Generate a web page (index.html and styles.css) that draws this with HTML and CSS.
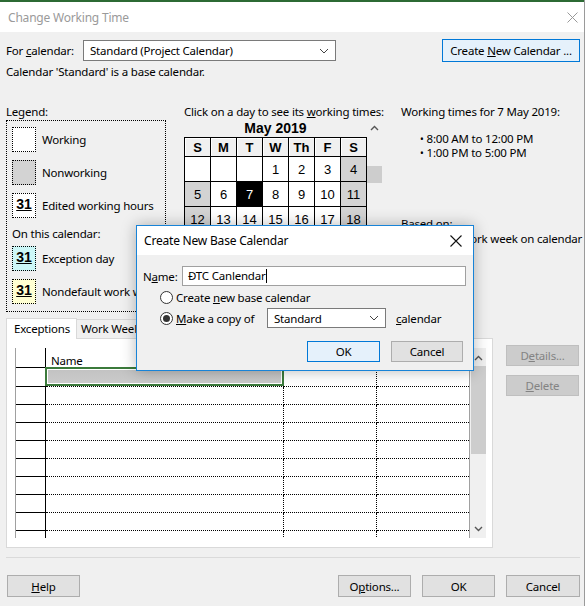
FILE: index.html
```html
<!DOCTYPE html>
<html>
<head>
  <title>Change Working Time</title>
  <link rel="stylesheet" href="styles.css">
</head>
<body>
  <div class="window">
    <div class="topline"></div>
    <div class="titlebar">
      <span class="title">Change Working Time</span>
      <svg class="close" width="11" height="11" viewBox="0 0 11 11"><path d="M0.5 0.5L10.5 10.5M10.5 0.5L0.5 10.5" stroke="#999" stroke-width="1" fill="none"/></svg>
    </div>

    <div class="content">
      <div class="cal-row">
        <label class="cal-label">For <u>c</u>alendar:</label>
        <div class="select wide">
          <span>Standard (Project Calendar)</span>
          <svg width="10" height="6" viewBox="0 0 10 6"><path d="M1 1L5 5L9 1" stroke="#444" fill="none"/></svg>
        </div>
        <button class="btn focus new-cal">Create <u>N</u>ew Calendar ...</button>
      </div>
      <div class="note">Calendar 'Standard' is a base calendar.</div>

      <div class="middle">
        <!-- legend -->
        <div class="legend">
          <div class="line">Legend:</div>
          <div class="legend-box">
            <div class="legend-item"><span class="swatch"></span>Working</div>
            <div class="legend-item"><span class="swatch gray"></span>Nonworking</div>
            <div class="legend-item"><span class="swatch">31</span>Edited working hours</div>
            <div class="line on-cal">On this calendar:</div>
            <div class="legend-item first"><span class="swatch cyan">31</span>Exception day</div>
            <div class="legend-item"><span class="swatch yellow">31</span>Nondefault work week</div>
          </div>
        </div>

        <!-- month picker -->
        <div class="picker">
          <div class="line">Click on a day to see its <u>w</u>orking times:</div>
          <div class="picker-body">
            <div class="month">
              <div class="month-name">May 2019</div>
              <div class="days">
                <div class="dh">S</div><div class="dh">M</div><div class="dh">T</div><div class="dh">W</div><div class="dh">Th</div><div class="dh">F</div><div class="dh">S</div>
                <div class="d"></div><div class="d"></div><div class="d"></div><div class="d">1</div><div class="d">2</div><div class="d">3</div><div class="d we">4</div>
                <div class="d we">5</div><div class="d">6</div><div class="d sel">7</div><div class="d">8</div><div class="d">9</div><div class="d">10</div><div class="d we">11</div>
                <div class="d we">12</div><div class="d">13</div><div class="d">14</div><div class="d">15</div><div class="d">16</div><div class="d">17</div><div class="d we">18</div>
                <div class="d we">19</div><div class="d">20</div><div class="d">21</div><div class="d">22</div><div class="d">23</div><div class="d">24</div><div class="d we">25</div>
                <div class="d we">26</div><div class="d">27</div><div class="d">28</div><div class="d">29</div><div class="d">30</div><div class="d">31</div><div class="d we"></div>
              </div>
            </div>
            <div class="cal-scroll">
              <svg class="chev" width="9" height="6" viewBox="0 0 9 6"><path d="M1 5L4.5 1.5L8 5" stroke="#555" stroke-width="1.4" fill="none"/></svg>
              <div class="cal-thumb"></div>
            </div>
          </div>
        </div>

        <!-- working times -->
        <div class="times">
          <div class="line">Working times for 7 May 2019:</div>
          <ul class="bullets top">
            <li>8:00 AM to 12:00 PM</li>
            <li>1:00 PM to 5:00 PM</li>
          </ul>
          <div class="line based">Based on:</div>
          <ul class="bullets base">
            <li>Default work week on calendar<br>'Standard'.</li>
          </ul>
        </div>
      </div>

      <div class="lower">
        <div class="tabs">
          <div class="tabstrip">
            <div class="tab active">Exceptions</div>
            <div class="tab">Work Weeks</div>
          </div>
          <div class="tabpanel">
            <div class="grid-wrap">
              <div class="grid">
                <div class="rh hd"></div><div class="ch">Name</div><div class="ch"></div><div class="ch"></div>
                <div class="rh"></div><div class="c1"><div class="cur"></div></div><div class="c2"></div><div class="c3"></div>
                <div class="rh"></div><div class="c1"></div><div class="c2"></div><div class="c3"></div>
                <div class="rh"></div><div class="c1"></div><div class="c2"></div><div class="c3"></div>
                <div class="rh"></div><div class="c1"></div><div class="c2"></div><div class="c3"></div>
                <div class="rh"></div><div class="c1"></div><div class="c2"></div><div class="c3"></div>
                <div class="rh"></div><div class="c1"></div><div class="c2"></div><div class="c3"></div>
                <div class="rh"></div><div class="c1"></div><div class="c2"></div><div class="c3"></div>
                <div class="rh"></div><div class="c1"></div><div class="c2"></div><div class="c3"></div>
                <div class="rh"></div><div class="c1"></div><div class="c2"></div><div class="c3"></div>
                <div class="rh"></div><div class="c1"></div><div class="c2"></div><div class="c3"></div>
              </div>
              <div class="vscroll">
                <svg width="9" height="6" viewBox="0 0 9 6"><path d="M1 5L4.5 1.5L8 5" stroke="#555" stroke-width="1.4" fill="none"/></svg>
                <div class="thumb"></div>
                <svg class="down" width="9" height="6" viewBox="0 0 9 6"><path d="M1 1L4.5 4.5L8 1" stroke="#555" stroke-width="1.4" fill="none"/></svg>
              </div>
            </div>
          </div>
        </div>
        <div class="side">
          <button class="btn off">D<u>e</u>tails...</button>
          <button class="btn off"><u>D</u>elete</button>
        </div>
      </div>

      <div class="sep"></div>

      <div class="footer">
        <button class="btn"><u>H</u>elp</button>
        <div class="spacer"></div>
        <button class="btn">O<u>p</u>tions...</button>
        <button class="btn">OK</button>
        <button class="btn">Cancel</button>
      </div>
    </div>

    <!-- Create New Base Calendar dialog -->
    <div class="modal">
      <div class="modal-title">
        <span>Create New Base Calendar</span>
        <svg width="12" height="12" viewBox="0 0 12 12"><path d="M0.5 0.5L11.5 11.5M11.5 0.5L0.5 11.5" stroke="#111" stroke-width="1.1" fill="none"/></svg>
      </div>
      <div class="modal-body">
        <div class="name-row">
          <label class="name-label">N<u>a</u>me:</label>
          <div class="input">ĐTC Canlendar<span class="caret"></span></div>
        </div>
        <div class="radio-row">
          <span class="radio"></span>
          <span>Create <u>n</u>ew base calendar</span>
        </div>
        <div class="radio-row copy">
          <span class="radio on"></span>
          <span class="copy-label"><u>M</u>ake a copy of</span>
          <div class="select small">
            <span>Standard</span>
            <svg width="10" height="6" viewBox="0 0 10 6"><path d="M1 1L5 5L9 1" stroke="#444" fill="none"/></svg>
          </div>
          <span class="after"><u>c</u>alendar</span>
        </div>
        <div class="modal-buttons">
          <button class="btn focus ok">OK</button>
          <button class="btn">Cancel</button>
        </div>
      </div>
    </div>
  </div>
</body>
</html>
```

FILE: styles.css
```css
html, body {
  margin: 0;
  height: 100%;
}

body {
  background: #ffffff;
  font-family: "Noto Sans", sans-serif;
  font-size: 11.5px;
  letter-spacing: -0.2px;
  color: #000;
}

u {
  text-decoration: underline;
  text-underline-offset: 1px;
}

.window {
  position: relative;
  width: 585px;
  height: 606px;
  background: #f0f0f0;
  border-right: 1px solid #9a9a9a;
  box-sizing: border-box;
  overflow: hidden;
}

.topline {
  height: 2px;
  background: #2c6a34;
}

.titlebar {
  height: 30px;
  background: #fff;
  display: flex;
  align-items: center;
  justify-content: space-between;
  padding: 0 6px 0 8px;
}

.title {
  color: #9a9a9a;
  font-size: 12px;
}

.content {
  padding: 0 4px 0 6px;
}

.line {
  line-height: 16px;
  white-space: nowrap;
}

/* buttons */
.btn {
  font-family: "Noto Sans", sans-serif;
  font-size: 11.5px;
  letter-spacing: -0.2px;
  color: #000;
  background: #e1e1e1;
  border: 1px solid #adadad;
  height: 22px;
  width: 73px;
  padding: 0;
}

.btn.focus {
  border-color: #0078d7;
}

.btn.off {
  background: #cccccc;
  border-color: #bfbfbf;
  color: #838383;
}

/* top row */
.cal-row {
  display: flex;
  align-items: center;
  height: 23px;
  margin-top: 7px;
}

.cal-label {
  width: 77px;
}

.select {
  display: flex;
  align-items: center;
  justify-content: space-between;
  background: #fff;
  border: 1px solid #7a7a7a;
  box-sizing: border-box;
  padding: 0 6px 0 6px;
}

.select.wide {
  width: 253px;
  height: 21px;
}

.new-cal {
  margin-left: auto;
  width: 138px;
  height: 23px;
  background: #e5f1fb;
}

.note {
  margin-top: 2px;
  line-height: 16px;
}

/* middle */
.middle {
  display: flex;
  margin-top: 24px;
}

.legend {
  width: 160px;
  flex: none;
}

.legend-box {
  height: 192px;
  border: 1px dotted #000;
  box-sizing: border-box;
  padding: 6px 5px 0;
}

.legend-item {
  display: flex;
  align-items: center;
  gap: 6px;
  height: 25px;
  margin-bottom: 8px;
  white-space: nowrap;
}

.legend-item.first {
  margin-top: 4px;
}

.swatch {
  flex: none;
  width: 24px;
  height: 25px;
  box-sizing: border-box;
  border: 1px dotted #000;
  background: #fff;
  text-align: center;
  font: bold 14px "Liberation Sans", sans-serif;
  letter-spacing: 0;
  line-height: 20px;
  text-decoration: underline;
}

.swatch.gray {
  background: #d3d3d3;
}

.swatch.cyan {
  background: #ccf7f7;
}

.swatch.yellow {
  background: #ffffd2;
}

.picker {
  width: 198px;
  flex: none;
  margin-left: 18px;
}

.picker-body {
  display: flex;
}

.month-name {
  height: 17px;
  text-align: center;
  font: bold 14px "Liberation Sans", sans-serif;
  letter-spacing: 0;
  line-height: 17px;
}

.days {
  display: grid;
  grid-template-columns: repeat(7, 26px);
  grid-template-rows: 19px;
  grid-auto-rows: 25px;
  border-left: 1px solid #000;
  border-top: 1px solid #000;
  font: 13px "Liberation Sans", sans-serif;
  letter-spacing: 0;
}

.dh, .d {
  border-right: 1px solid #000;
  border-bottom: 1px solid #000;
  display: flex;
  align-items: center;
  justify-content: center;
}

.dh {
  background: #f0f0f0;
  box-shadow: inset 1px 1px #fff;
  font-weight: bold;
}

.d {
  background: #fff;
}

.d.we {
  background: #d3d3d3;
}

.d.sel {
  background: #000;
  color: #fff;
}

.cal-scroll {
  width: 15px;
  display: flex;
  flex-direction: column;
  align-items: center;
}

.chev {
  margin-top: 5px;
}

.cal-thumb {
  margin-top: 35px;
  width: 15px;
  height: 17px;
  background: #cdcdcd;
}

.times {
  margin-left: 19px;
  width: 183px;
  flex: none;
}

.bullets {
  list-style: none;
  margin: 0;
  padding-left: 19px;
  line-height: 13px;
  white-space: nowrap;
}

.bullets li::before {
  content: "\2022";
  margin-right: 3px;
  font-size: 10px;
}

.bullets.top {
  margin-top: 12px;
}

.bullets.base {
  padding-left: 13px;
}

.based {
  margin-top: 56px;
}

/* exceptions tab */
.lower {
  display: flex;
  margin-top: 6px;
}

.tabs {
  width: 487px;
}

.tabstrip {
  display: flex;
  align-items: flex-end;
  height: 20px;
}

.tab {
  height: 18px;
  line-height: 18px;
  padding: 0 4px;
  background: #f0f0f0;
  border: 1px solid #d9d9d9;
  border-bottom: none;
  border-left: none;
}

.tab.active {
  position: relative;
  z-index: 1;
  height: 21px;
  width: 71px;
  box-sizing: border-box;
  margin-bottom: -1px;
  line-height: 19px;
  padding: 0 7px;
  background: #fff;
  border-left: 1px solid #d9d9d9;
}

.tabpanel {
  height: 210px;
  box-sizing: border-box;
  border: 1px solid #d9d9d9;
  background: #fff;
  padding: 9px 6px 0 8px;
}

.grid-wrap {
  display: flex;
  height: 190px;
}

.grid {
  display: grid;
  grid-template-columns: 30px 238px 93px 92px;
  grid-template-rows: 20px 19px;
  grid-auto-rows: 18px;
  border-left: 1px solid #a0a0a0;
  overflow: hidden;
  background: #fff;
}

.grid > div {
  box-sizing: border-box;
}

.rh {
  border-right: 1px solid #000;
  border-bottom: 1px solid #000;
}

.ch {
  padding: 6px 0 0 5px;
  line-height: 14px;
}

.c1, .c2 {
  border-right: 1px dotted #000;
  border-bottom: 1px dotted #000;
}

.c3 {
  border-bottom: 1px dotted #000;
}

.cur {
  height: 19px;
  margin: -1px -1px 0 -1px;
  border: 2px solid #3b7a3b;
  box-sizing: border-box;
  background: linear-gradient(#c2c2c2, #cbcbcb);
  box-shadow: inset 0 0 0 1px #fff;
}

.vscroll {
  width: 17px;
  border-left: 1px solid #a0a0a0;
  background: #f0f0f0;
  display: flex;
  flex-direction: column;
  align-items: center;
  box-sizing: border-box;
  padding-top: 7px;
}

.thumb {
  width: 15px;
  height: 88px;
  margin-top: 5px;
  background: #cdcdcd;
}

.vscroll .down {
  margin-top: auto;
  margin-bottom: 6px;
}

.side {
  margin-left: 13px;
  padding-top: 27px;
  display: flex;
  flex-direction: column;
  gap: 9px;
}

.side .btn {
  height: 21px;
}

.sep {
  margin-top: 9px;
  height: 1px;
  background: #dadada;
}

.footer {
  display: flex;
  gap: 11px;
  margin-top: 17px;
}

.footer .btn:first-child {
  margin-left: 1px;
}

.spacer {
  flex: 1;
}

.footer .btn:last-child {
  width: 74px;
}

/* modal */
.modal {
  position: absolute;
  left: 136px;
  top: 225px;
  width: 338px;
  height: 146px;
  box-sizing: border-box;
  border: 1px solid #1883d7;
  background: #f0f0f0;
  box-shadow: 0 0 14px rgba(0, 0, 0, 0.28);
}

.modal-title {
  height: 29px;
  background: #fff;
  display: flex;
  align-items: center;
  justify-content: space-between;
  padding: 0 11px 0 7px;
  font-size: 12px;
}

.modal-body {
  padding: 11px 0 0 6px;
}

.name-row {
  display: flex;
  align-items: center;
}

.name-label {
  width: 39px;
}

.input {
  width: 284px;
  height: 20px;
  box-sizing: border-box;
  border: 1px solid #a0a0a0;
  background: #fff;
  line-height: 18px;
  padding-left: 5px;
}

.caret {
  display: inline-block;
  width: 1px;
  height: 14px;
  background: #000;
  vertical-align: -3px;
}

.radio-row {
  display: flex;
  align-items: center;
  height: 16px;
  margin-top: 3px;
  padding-left: 17px;
  gap: 3px;
}

.radio-row.copy {
  height: 20px;
}

.radio {
  flex: none;
  width: 13px;
  height: 13px;
  box-sizing: border-box;
  border: 1px solid #333;
  border-radius: 50%;
  background: #fff;
  position: relative;
}

.radio.on::after {
  content: "";
  position: absolute;
  left: 2px;
  top: 2px;
  width: 7px;
  height: 7px;
  border-radius: 50%;
  background: #333;
}

.copy-label {
  width: 88px;
}

.select.small {
  width: 119px;
  height: 20px;
}

.after {
  margin-left: 7px;
}

.modal-buttons {
  display: flex;
  gap: 11px;
  margin-top: 13px;
  padding-left: 164px;
}

.modal-buttons .btn {
  height: 21px;
}

.modal-buttons .ok {
  background: #e5f1fb;
}

.modal-buttons .btn:last-child {
  width: 72px;
}
```
